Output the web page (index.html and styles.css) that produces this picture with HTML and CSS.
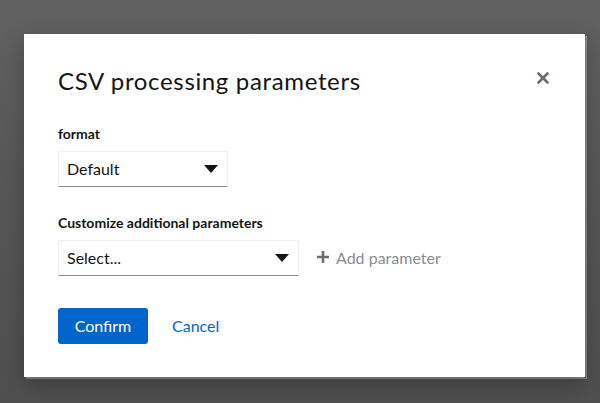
FILE: index.html
```html
<!DOCTYPE html>
<html lang="en">
<head>
    <meta charset="UTF-8">
    <title>CSV processing parameters</title>
    <link rel="stylesheet" href="styles.css">
</head>
<body>
    <div class="modal">
        <div class="modal-header">
            <h1>CSV processing parameters</h1>
            <button class="close-btn" aria-label="Close">
                <svg width="12" height="12" viewBox="0 0 12 12">
                    <path d="M1.5 1.5 L10.5 10.5 M10.5 1.5 L1.5 10.5" stroke="#6a6e73" stroke-width="2.6" stroke-linecap="round"/>
                </svg>
            </button>
        </div>

        <div class="form-group">
            <label>format</label>
            <div class="select select-small">
                <span>Default</span>
                <span class="caret"></span>
            </div>
        </div>

        <div class="form-group">
            <label>Customize additional parameters</label>
            <div class="param-row">
                <div class="select select-wide">
                    <span>Select...</span>
                    <span class="caret"></span>
                </div>
                <button class="add-btn">
                    <svg width="14" height="14" viewBox="0 0 14 14">
                        <path d="M7 1 V13 M1 7 H13" stroke="#6a6e73" stroke-width="2.6"/>
                    </svg>
                    Add parameter
                </button>
            </div>
        </div>

        <div class="actions">
            <button class="confirm-btn">Confirm</button>
            <button class="cancel-btn">Cancel</button>
        </div>
    </div>
</body>
</html>
```

FILE: styles.css
```css
* {
    margin: 0;
    padding: 0;
    box-sizing: border-box;
}

body {
    font-family: Lato, "Open Sans", sans-serif;
    background: linear-gradient(180deg, #616161 0%, #565656 50%, #4f4f4f 100%);
    height: 403px;
    overflow: hidden;
    padding: 34px 15px 0 24px;
    color: #151515;
}

.modal {
    width: 561px;
    height: 343px;
    background: white;
    padding: 31px 34px 0 34px;
    box-shadow: 2px 2px 0 rgba(255, 255, 255, 0.25), 0 8px 20px rgba(0, 0, 0, 0.25);
}

.modal-header {
    display: flex;
    justify-content: space-between;
    align-items: center;
    margin-bottom: 27px;
}

.modal-header h1 {
    font-size: 24px;
    font-weight: 400;
    line-height: 31px;
    letter-spacing: 0.65px;
}

.close-btn {
    background: none;
    border: none;
    margin-right: 2px;
    margin-top: -5px;
    display: flex;
}

.form-group {
    margin-bottom: 25px;
}

.form-group label {
    display: block;
    font-size: 14px;
    font-weight: 700;
    line-height: 21px;
    margin-bottom: 7px;
}

.select {
    display: flex;
    align-items: center;
    justify-content: space-between;
    height: 36px;
    padding: 0 9px 2px 8px;
    border: 1px solid #f0f0f0;
    border-bottom-color: #8a8d90;
    font-size: 16px;
}

.select-small {
    width: 170px;
}

.select-wide {
    width: 241px;
}

.caret {
    width: 0;
    height: 0;
    margin-top: 2px;
    border-left: 7px solid transparent;
    border-right: 7px solid transparent;
    border-top: 8px solid #151515;
}

.param-row {
    display: flex;
    align-items: center;
}

.add-btn {
    display: flex;
    align-items: center;
    gap: 6px;
    background: none;
    border: none;
    font-family: inherit;
    font-size: 16px;
    color: #8a8d90;
    margin-left: 17px;
    padding-bottom: 2px;
}

.actions {
    display: flex;
    align-items: center;
    gap: 8px;
    margin-top: 32px;
}

.confirm-btn {
    background: #0066cc;
    color: white;
    border: none;
    border-radius: 3px;
    font-family: inherit;
    font-size: 16px;
    width: 90px;
    height: 36px;
    padding-bottom: 2px;
}

.cancel-btn {
    background: none;
    border: none;
    color: #0066cc;
    font-family: inherit;
    font-size: 16px;
    padding: 0 16px 2px;
}
```
